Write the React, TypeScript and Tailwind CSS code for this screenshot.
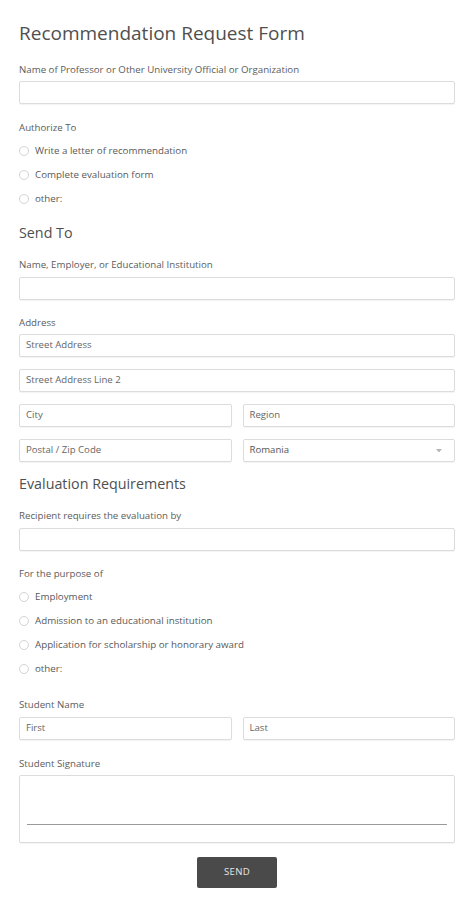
import React from 'react';

const Label = ({ children, className = '' }: { children: React.ReactNode; className?: string }) => (
  <div className={`text-[9.7px] leading-[14px] text-[#5c5c5c] ${className}`}>{children}</div>
);

const Field = ({ placeholder = '', className = '' }: { placeholder?: string; className?: string }) => (
  <div
    className={`h-[23px] rounded-[2px] border border-[#dcdcdc] bg-white px-[6px] flex items-center text-[9.6px] text-[#666] shadow-[0_1px_1px_rgba(0,0,0,0.05)] ${className}`}
  >
    {placeholder}
  </div>
);

const Radio = ({ label }: { label: string }) => (
  <div className="h-[24px] flex items-center gap-[6px]">
    <span className="w-[10px] h-[10px] rounded-full border border-[#d4d4d4] bg-white" />
    <span className="text-[9.75px] text-[#595959]">{label}</span>
  </div>
);

export default function App() {
  return (
    <div
      className="w-[474px] min-h-[907px] bg-white px-[19px] pt-[19px]"
      style={{ fontFamily: '"Open Sans", "Noto Sans", sans-serif' }}
    >
      <h1 className="text-[19px] leading-[28px] text-[#4f4f4f]">Recommendation Request Form</h1>

      <Label className="mt-[16px]">Name of Professor or Other University Official or Organization</Label>
      <Field className="mt-[4px]" />

      <Label className="mt-[17px]">Authorize To</Label>
      <div className="mt-[4px]">
        <Radio label="Write a letter of recommendation" />
        <Radio label="Complete evaluation form" />
        <Radio label="other:" />
      </div>

      <h2 className="mt-[12px] text-[14.3px] leading-[20px] text-[#4f4f4f]">Send To</h2>

      <Label className="mt-[15px]">Name, Employer, or Educational Institution</Label>
      <Field className="mt-[5px]" />

      <Label className="mt-[16px]">Address</Label>
      <div className="mt-[4px] flex flex-col gap-[12px]">
        <Field placeholder="Street Address" />
        <Field placeholder="Street Address Line 2" />
        <div className="grid grid-cols-2 gap-[11px]">
          <Field placeholder="City" />
          <Field placeholder="Region" />
        </div>
        <div className="grid grid-cols-2 gap-[11px]">
          <Field placeholder="Postal / Zip Code" />
          <div className="h-[23px] rounded-[2px] border border-[#dcdcdc] bg-white px-[6px] flex items-center justify-between text-[9.6px] text-[#555] shadow-[0_1px_1px_rgba(0,0,0,0.05)]">
            <span>Romania</span>
            <svg width="6" height="3.5" viewBox="0 0 7 4" className="mr-[6px]">
              <path d="M0 0 L7 0 L3.5 4 Z" fill="#b5b5b5" />
            </svg>
          </div>
        </div>
      </div>

      <h2 className="mt-[12px] text-[14.3px] leading-[20px] text-[#4f4f4f]">Evaluation Requirements</h2>

      <Label className="mt-[15px]">Recipient requires the evaluation by</Label>
      <Field className="mt-[5px]" />

      <Label className="mt-[16px]">For the purpose of</Label>
      <div className="mt-[4px]">
        <Radio label="Employment" />
        <Radio label="Admission to an educational institution" />
        <Radio label="Application for scholarship or honorary award" />
        <Radio label="other:" />
      </div>

      <Label className="mt-[17px]">Student Name</Label>
      <div className="mt-[5px] grid grid-cols-2 gap-[11px]">
        <Field placeholder="First" />
        <Field placeholder="Last" />
      </div>

      <Label className="mt-[17px]">Student Signature</Label>
      <div className="mt-[4px] h-[68px] rounded-[2px] border border-[#dcdcdc] bg-white px-[7px] pt-[48px] shadow-[0_1px_1px_rgba(0,0,0,0.05)]">
        <div className="h-[1px] bg-[#9a9a9a]" />
      </div>

      <div className="mt-[14px] flex justify-center">
        <button className="w-[80px] h-[31px] rounded-[2px] bg-[#4a4a4a] text-[9.6px] text-[#e6e6e6] tracking-[0.3px]">
          SEND
        </button>
      </div>
    </div>
  );
}
